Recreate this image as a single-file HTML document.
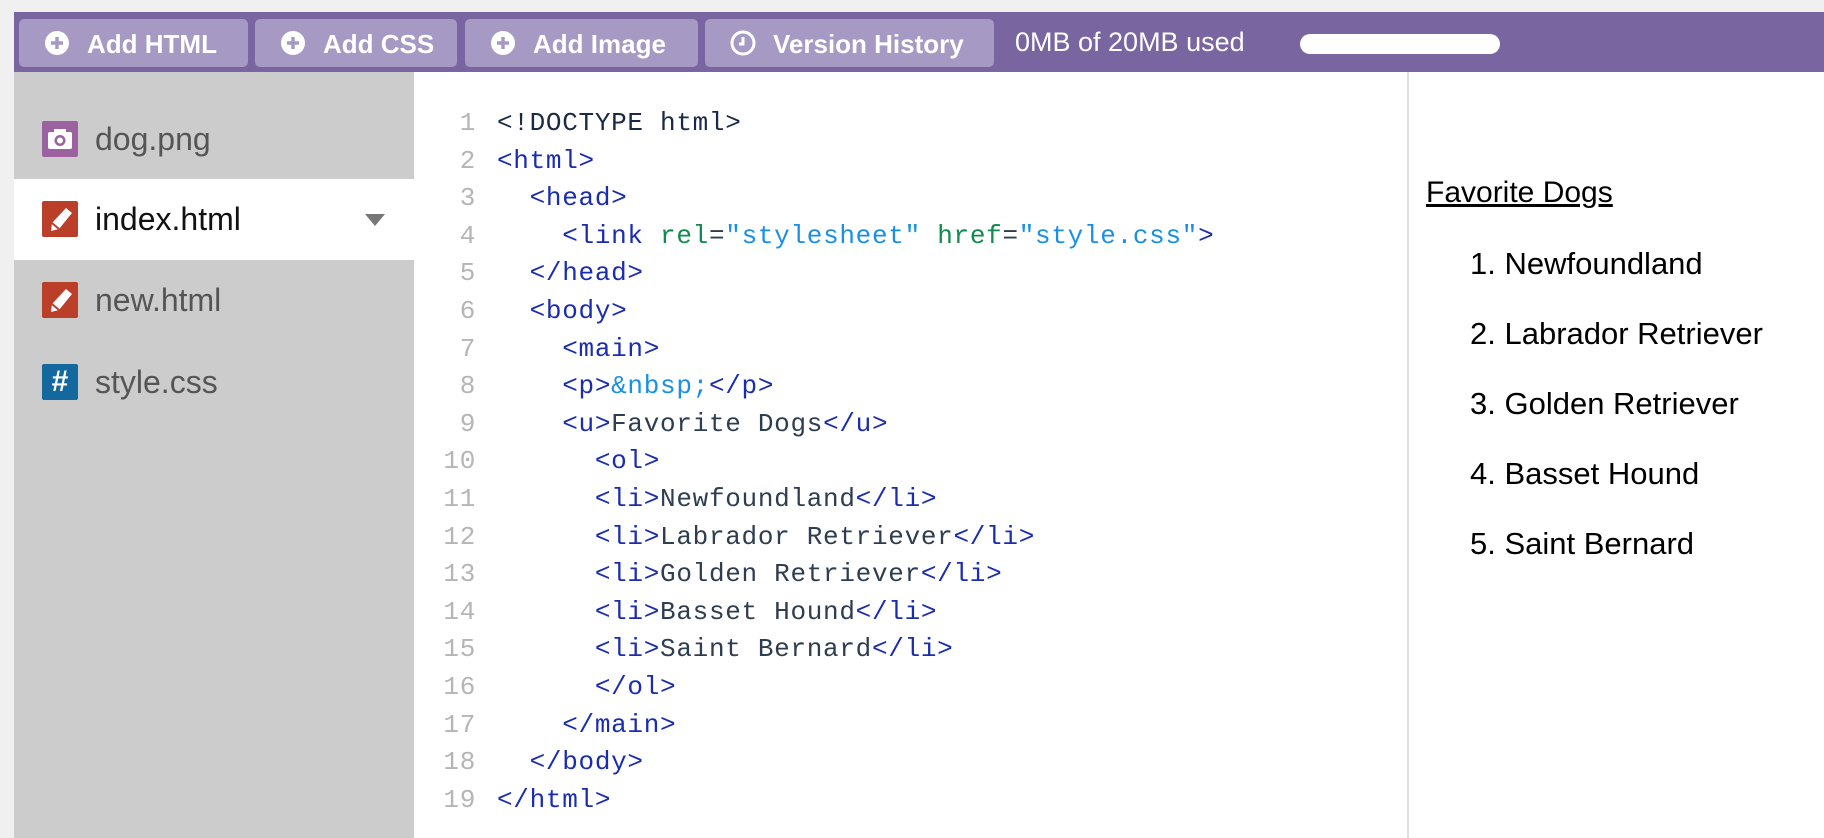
<!DOCTYPE html>
<html><head><style>
*{margin:0;padding:0;box-sizing:border-box}
body{width:1824px;height:838px;overflow:hidden;background:#fff;font-family:"Liberation Sans",sans-serif;position:relative}
svg{display:block}
.top{position:absolute;left:0;top:0;width:1824px;height:12px;background:#f0f0f0}
.lm{position:absolute;left:0;top:12px;width:14px;height:826px;background:#f0f0f0}
.bar{position:absolute;left:14px;top:12px;width:1810px;height:60px;background:#7965a0}
.btn{position:absolute;top:7px;height:48px;background:#a699c3;border-radius:5px;color:#fff;font-weight:bold;font-size:26px;line-height:50px;padding-left:68px}
.btn svg{position:absolute;left:25px;top:11px}
.used{position:absolute;left:1001px;top:0;line-height:60px;color:#fff;font-size:27px}
.prog{position:absolute;top:22px;width:200px;height:20px;background:#fff;border-radius:10px}
.side{position:absolute;left:14px;top:72px;width:400px;height:766px;background:#cccccc}
.row{position:absolute;left:0;width:400px;height:81px;font-size:32px;color:#555;line-height:81px;padding-left:81px}
.row .ic{position:absolute;left:28px;top:22px;width:36px;height:36px;border-radius:2px;overflow:hidden}
.sel{background:#fff;color:#111}
.ed{position:absolute;left:414px;top:72px;width:993px;height:766px}
.ln{position:absolute;left:0;width:62px;text-align:right;color:#b5b5b5}
.cd{position:absolute;left:83px;white-space:pre}
.ed div{font-family:"Liberation Mono",monospace;font-size:26px;letter-spacing:0.7px;height:37.6px;line-height:37.6px}
.t{color:#1a2db0}.a{color:#118a4f}.s{color:#1b8fe8}.x{color:#2e3d4f}.d{color:#1b2a44}
.div{position:absolute;left:1407px;top:72px;width:2px;height:766px;background:#dcdcdc}
.pv{position:absolute;left:1426px;font-size:31px;color:#000}
</style></head><body>
<div class="top"></div><div class="lm"></div>
<div class="bar">
 <div class="btn" style="left:5px;width:229px"><svg width="26" height="26"><circle cx="13" cy="13" r="12" fill="#fff"/><path d="M13 7v12M7 13h12" stroke="#a699c3" stroke-width="3.5"/></svg>Add HTML</div>
 <div class="btn" style="left:241px;width:202px"><svg width="26" height="26"><circle cx="13" cy="13" r="12" fill="#fff"/><path d="M13 7v12M7 13h12" stroke="#a699c3" stroke-width="3.5"/></svg>Add CSS</div>
 <div class="btn" style="left:451px;width:233px"><svg width="26" height="26"><circle cx="13" cy="13" r="12" fill="#fff"/><path d="M13 7v12M7 13h12" stroke="#a699c3" stroke-width="3.5"/></svg>Add Image</div>
 <div class="btn" style="left:691px;width:289px"><svg width="26" height="26"><circle cx="13" cy="13" r="11" fill="none" stroke="#fff" stroke-width="3"/><path d="M13 7v7h-4" stroke="#fff" stroke-width="3" fill="none"/></svg>Version History</div>
 <div class="used">0MB of 20MB used</div>
 <div class="prog" style="left:1286px"></div>
</div>
<div class="side">
 <div class="row" style="top:27px"><div class="ic" style="background:#9c62a0"><svg width="36" height="36"><rect x="6" y="11" width="24" height="17" rx="2" fill="#fff"/><rect x="12" y="8" width="12" height="5" fill="#fff"/><circle cx="18" cy="19.5" r="5.5" fill="#9c62a0"/><circle cx="18" cy="19.5" r="3" fill="#fff"/></svg></div>dog.png</div>
 <div class="row sel" style="top:107px"><div class="ic" style="background:#bb3f28"><svg width="36" height="36"><path d="M24 7l6 5-13 16-8 2 1-8z" fill="#fff"/><path d="M10 22l7 6" stroke="#bb3f28" stroke-width="2"/></svg></div>index.html<svg style="position:absolute;left:351px;top:35px" width="20" height="12"><path d="M0 0h20l-10 12z" fill="#777"/></svg></div>
 <div class="row" style="top:188px"><div class="ic" style="background:#bb3f28"><svg width="36" height="36"><path d="M24 7l6 5-13 16-8 2 1-8z" fill="#fff"/><path d="M10 22l7 6" stroke="#bb3f28" stroke-width="2"/></svg></div>new.html</div>
 <div class="row" style="top:270px"><div class="ic" style="background:#13699e;color:#fff;font-weight:bold;font-size:30px;line-height:36px;text-align:center">#</div>style.css</div>
</div>
<div class="ed">
<div class="ln" style="top:33px">1</div><div class="cd d" style="top:33px">&lt;!DOCTYPE html&gt;</div>
<div class="ln" style="top:70.6px">2</div><div class="cd t" style="top:70.6px">&lt;html&gt;</div>
<div class="ln" style="top:108.2px">3</div><div class="cd t" style="top:108.2px">  &lt;head&gt;</div>
<div class="ln" style="top:145.8px">4</div><div class="cd t" style="top:145.8px">    &lt;link <span class="a">rel</span><span class="x">=</span><span class="s">"stylesheet"</span> <span class="a">href</span><span class="x">=</span><span class="s">"style.css"</span>&gt;</div>
<div class="ln" style="top:183.4px">5</div><div class="cd t" style="top:183.4px">  &lt;/head&gt;</div>
<div class="ln" style="top:221px">6</div><div class="cd t" style="top:221px">  &lt;body&gt;</div>
<div class="ln" style="top:258.6px">7</div><div class="cd t" style="top:258.6px">    &lt;main&gt;</div>
<div class="ln" style="top:296.2px">8</div><div class="cd t" style="top:296.2px">    &lt;p&gt;<span class="s">&amp;nbsp;</span>&lt;/p&gt;</div>
<div class="ln" style="top:333.8px">9</div><div class="cd t" style="top:333.8px">    &lt;u&gt;<span class="x">Favorite Dogs</span>&lt;/u&gt;</div>
<div class="ln" style="top:371.4px">10</div><div class="cd t" style="top:371.4px">      &lt;ol&gt;</div>
<div class="ln" style="top:409px">11</div><div class="cd t" style="top:409px">      &lt;li&gt;<span class="x">Newfoundland</span>&lt;/li&gt;</div>
<div class="ln" style="top:446.6px">12</div><div class="cd t" style="top:446.6px">      &lt;li&gt;<span class="x">Labrador Retriever</span>&lt;/li&gt;</div>
<div class="ln" style="top:484.2px">13</div><div class="cd t" style="top:484.2px">      &lt;li&gt;<span class="x">Golden Retriever</span>&lt;/li&gt;</div>
<div class="ln" style="top:521.8px">14</div><div class="cd t" style="top:521.8px">      &lt;li&gt;<span class="x">Basset Hound</span>&lt;/li&gt;</div>
<div class="ln" style="top:559.4px">15</div><div class="cd t" style="top:559.4px">      &lt;li&gt;<span class="x">Saint Bernard</span>&lt;/li&gt;</div>
<div class="ln" style="top:597px">16</div><div class="cd t" style="top:597px">      &lt;/ol&gt;</div>
<div class="ln" style="top:634.6px">17</div><div class="cd t" style="top:634.6px">    &lt;/main&gt;</div>
<div class="ln" style="top:672.2px">18</div><div class="cd t" style="top:672.2px">  &lt;/body&gt;</div>
<div class="ln" style="top:709.8px">19</div><div class="cd t" style="top:709.8px">&lt;/html&gt;</div>
</div>
<div class="div"></div>
<div class="pv" style="top:176px;text-decoration:underline;font-size:30px">Favorite Dogs</div>
<div class="pv" style="left:1470px;top:246px">1. Newfoundland</div>
<div class="pv" style="left:1470px;top:316px">2. Labrador Retriever</div>
<div class="pv" style="left:1470px;top:386px">3. Golden Retriever</div>
<div class="pv" style="left:1470px;top:456px">4. Basset Hound</div>
<div class="pv" style="left:1470px;top:526px">5. Saint Bernard</div>
</body></html>
